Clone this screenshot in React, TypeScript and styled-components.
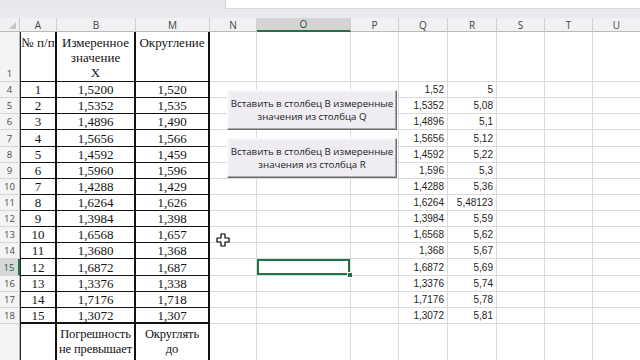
import React from "react";
import styled, { createGlobalStyle } from "styled-components";

const GlobalStyle = createGlobalStyle`
  html, body { margin: 0; padding: 0; background: #ffffff; }
  body { width: 640px; height: 360px; overflow: hidden; }
  * { box-sizing: border-box; }
`;

const ROW_HEIGHTS = [16, 16, 16, 17, 16, 16, 16, 16, 16, 16, 16, 17, 16, 16, 16];

const Page = styled.div`
  position: relative;
  width: 640px;
  height: 360px;
  overflow: hidden;
  display: flex;
  flex-direction: column;
  background: #ffffff;
`;

const TopBar = styled.div`
  height: 18px;
  flex-shrink: 0;
  display: flex;
  flex-direction: column;
  background: #e8e7ec;
`;

const FormulaRow = styled.div`
  height: 9px;
  display: flex;
`;

const NameArea = styled.div`
  width: 225px;
  background: #e7e6eb;
`;

const FormulaBox = styled.div`
  flex: 1;
  background: #ffffff;
  border-left: 1px solid #d4d3d8;
  border-bottom: 1px solid #d9d8dd;
`;

const Band = styled.div`
  height: 9px;
  background: #eae9ee;
`;

const Sheet = styled.div`
  display: grid;
  grid-template-columns: 20px 37px 79px 74px 47px 94px 48px 49px 49px 48px 48px 48px;
  grid-template-rows: 14px 50px ${ROW_HEIGHTS.map((h) => `${h}px`).join(" ")} 64px;
  width: 641px;
  flex-shrink: 0;
`;

const Corner = styled.div`
  position: relative;
  background: #f0f0f2;
  border-right: 1px solid #c8c8c8;
  border-bottom: 1px solid #b9b9b9;
`;

const CornerTriangle = styled.div`
  position: absolute;
  right: 3px;
  bottom: 2px;
  width: 0;
  height: 0;
  border-left: 7px solid transparent;
  border-bottom: 7px solid #c4c4c4;
`;

const ColHead = styled.div<{ $selected?: boolean }>`
  display: flex;
  align-items: center;
  justify-content: center;
  font-family: "Open Sans", "Liberation Sans", sans-serif;
  font-size: 10px;
  color: ${(p) => (p.$selected ? "#1f5a36" : "#444444")};
  background: ${(p) => (p.$selected ? "#d4d4d6" : "#f1f1f3")};
  border-right: 1px solid #cfcfcf;
  border-bottom: ${(p) => (p.$selected ? "2px solid #217346" : "1px solid #b9b9b9")};
`;

const RowHead = styled.div<{ $selected?: boolean; $bottom?: boolean }>`
  display: flex;
  align-items: ${(p) => (p.$bottom ? "flex-end" : "center")};
  justify-content: center;
  padding-bottom: ${(p) => (p.$bottom ? "1px" : "0")};
  font-family: "Open Sans", "Liberation Sans", sans-serif;
  font-size: 9.5px;
  color: ${(p) => (p.$selected ? "#1f5a36" : "#4a4a4a")};
  background: ${(p) => (p.$selected ? "#d8d8da" : "#f4f4f5")};
  border-right: ${(p) => (p.$selected ? "2px solid #217346" : "1px solid #b9b9b9")};
  border-bottom: 1px solid #d6d6d6;
`;

const TableCell = styled.div<{ $top?: boolean; $first?: boolean; $bottom?: "thin" | "thick" | "none" }>`
  display: flex;
  justify-content: center;
  align-items: ${(p) => (p.$top ? "flex-start" : "center")};
  padding-top: ${(p) => (p.$top ? "3px" : "0")};
  text-align: center;
  white-space: nowrap;
  font-family: "Liberation Serif", "Times New Roman", serif;
  font-size: 13px;
  line-height: 15px;
  color: #141414;
  background: #ffffff;
  border-left: ${(p) => (p.$first ? "1px solid #222" : "none")};
  border-right: 2px solid #121212;
  border-bottom: ${(p) =>
    p.$bottom === "none" ? "none" : p.$bottom === "thick" ? "2px solid #121212" : "1px solid #121212"};
`;

const NoteText = styled.span`
  font-size: 12.5px;
  letter-spacing: -0.1px;
`;

const GridCell = styled.div<{ $selected?: boolean }>`
  position: relative;
  display: flex;
  align-items: center;
  justify-content: flex-end;
  padding-right: 3px;
  font-family: "Liberation Sans", Arial, sans-serif;
  font-size: 10px;
  color: #1e1e1e;
  background: #ffffff;
  border-right: 1px solid #dadada;
  border-bottom: 1px solid #dadada;
  box-shadow: ${(p) => (p.$selected ? "inset 0 0 0 2px #217346" : "none")};
`;

const FillHandle = styled.div`
  position: absolute;
  right: -3px;
  bottom: -3px;
  width: 6px;
  height: 6px;
  background: #217346;
  border: 1px solid #ffffff;
  z-index: 2;
`;

const ButtonStack = styled.div`
  position: absolute;
  left: 227px;
  top: 90px;
  display: flex;
  flex-direction: column;
  gap: 8px;
`;

const MacroButton = styled.button`
  width: 170px;
  height: 40px;
  padding: 0;
  margin: 0;
  background: #efecf2;
  border: 1px solid;
  border-color: #fafafa #6c6c6c #6c6c6c #fafafa;
  box-shadow: inset -1px -1px 0 #aaaaaa, inset 1px 1px 0 #f6f4f8;
  font-family: "Open Sans", "Liberation Sans", sans-serif;
  font-size: 9.7px;
  line-height: 13.5px;
  color: #222222;
  text-align: center;
`;

const Cursor = styled.svg`
  position: absolute;
  left: 216px;
  top: 233px;
`;

const COLS = ["A", "B", "M", "N", "O", "P", "Q", "R", "S", "T", "U"];

const B_VALS = ["1,5200", "1,5352", "1,4896", "1,5656", "1,4592", "1,5960", "1,4288", "1,6264", "1,3984", "1,6568", "1,3680", "1,6872", "1,3376", "1,7176", "1,3072"];
const M_VALS = ["1,520", "1,535", "1,490", "1,566", "1,459", "1,596", "1,429", "1,626", "1,398", "1,657", "1,368", "1,687", "1,338", "1,718", "1,307"];
const Q_VALS = ["1,52", "1,5352", "1,4896", "1,5656", "1,4592", "1,596", "1,4288", "1,6264", "1,3984", "1,6568", "1,368", "1,6872", "1,3376", "1,7176", "1,3072"];
const R_VALS = ["5", "5,08", "5,1", "5,12", "5,22", "5,3", "5,36", "5,48123", "5,59", "5,62", "5,67", "5,69", "5,74", "5,78", "5,81"];

export default function App() {
  return (
    <>
      <GlobalStyle />
      <Page>
        <TopBar>
          <FormulaRow>
            <NameArea />
            <FormulaBox />
          </FormulaRow>
          <Band />
        </TopBar>
        <Sheet>
          <Corner>
            <CornerTriangle />
          </Corner>
          {COLS.map((c) => (
            <ColHead key={c} $selected={c === "O"}>
              {c}
            </ColHead>
          ))}

          <RowHead $bottom>1</RowHead>
          <TableCell $first $top>№ п/п</TableCell>
          <TableCell $top>
            Измеренное
            <br />
            значение
            <br />X
          </TableCell>
          <TableCell $top>Округление</TableCell>
          {COLS.slice(3).map((c) => (
            <GridCell key={c} />
          ))}

          {B_VALS.map((b, i) => {
            const rowNum = i + 4;
            const isSel = rowNum === 15;
            const edge = i === 14 ? "thick" : "thin";
            return (
              <React.Fragment key={rowNum}>
                <RowHead $selected={isSel}>{rowNum}</RowHead>
                <TableCell $first $bottom={edge}>{i + 1}</TableCell>
                <TableCell $bottom={edge}>{b}</TableCell>
                <TableCell $bottom={edge}>{M_VALS[i]}</TableCell>
                <GridCell />
                <GridCell $selected={isSel}>{isSel && <FillHandle />}</GridCell>
                <GridCell />
                <GridCell>{Q_VALS[i]}</GridCell>
                <GridCell>{R_VALS[i]}</GridCell>
                <GridCell />
                <GridCell />
                <GridCell />
              </React.Fragment>
            );
          })}

          <RowHead $bottom />
          <TableCell $first $bottom="none" />
          <TableCell $top $bottom="none">
            <NoteText>
              Погрешность
              <br />
              не превышает
            </NoteText>
          </TableCell>
          <TableCell $top $bottom="none">
            <NoteText>
              Округлять
              <br />
              до
            </NoteText>
          </TableCell>
          {COLS.slice(3).map((c) => (
            <GridCell key={c} />
          ))}
        </Sheet>

        <ButtonStack>
          <MacroButton>
            Вставить в столбец В измеренные
            <br />
            значения из столбца Q
          </MacroButton>
          <MacroButton>
            Вставить в столбец В измеренные
            <br />
            значения из столбца R
          </MacroButton>
        </ButtonStack>

        <Cursor width="14" height="14" viewBox="0 0 14 14">
          <path
            d="M5 1 H9 V5 H13 V9 H9 V13 H5 V9 H1 V5 H5 Z"
            fill="#ffffff"
            stroke="#000000"
            strokeWidth="1.2"
            strokeLinejoin="round"
          />
        </Cursor>
      </Page>
    </>
  );
}
